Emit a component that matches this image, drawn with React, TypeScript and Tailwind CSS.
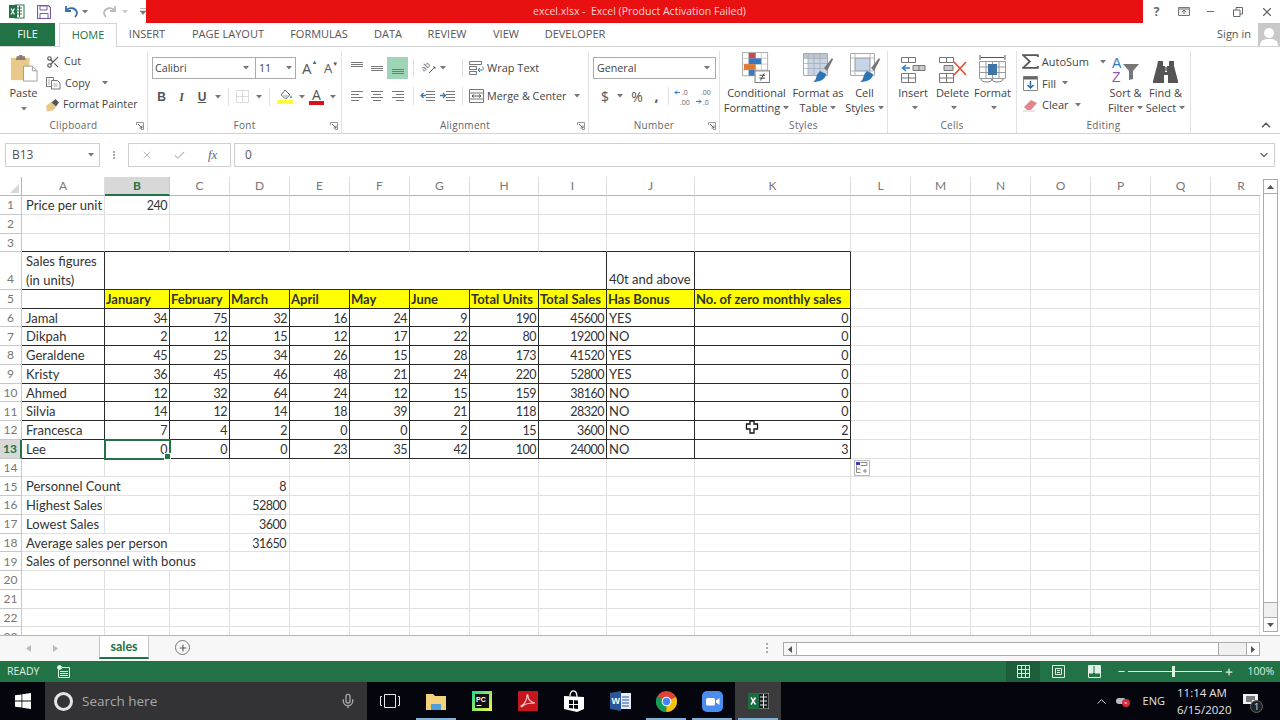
import { Fragment, ReactNode } from 'react'
import { Mic, Scissors, ChevronUp, ChevronDown, X, Check, Plus, Minus } from 'lucide-react'

const table: (string | number)[][] = [
  ['Jamal', 34, 75, 32, 16, 24, 9, 190, 45600, 'YES', 0],
  ['Dikpah', 2, 12, 15, 12, 17, 22, 80, 19200, 'NO', 0],
  ['Geraldene', 45, 25, 34, 26, 15, 28, 173, 41520, 'YES', 0],
  ['Kristy', 36, 45, 46, 48, 21, 24, 220, 52800, 'YES', 0],
  ['Ahmed', 12, 32, 64, 24, 12, 15, 159, 38160, 'NO', 0],
  ['Silvia', 14, 12, 14, 18, 39, 21, 118, 28320, 'NO', 0],
  ['Francesca', 7, 4, 2, 0, 0, 2, 15, 3600, 'NO', 2],
  ['Lee', 0, 0, 0, 23, 35, 42, 100, 24000, 'NO', 3],
]

const months = ['January', 'February', 'March', 'April', 'May', 'June', 'Total Units', 'Total Sales', 'Has Bonus', 'No. of zero monthly sales']
const columns = ['A', 'B', 'C', 'D', 'E', 'F', 'G', 'H', 'I', 'J', 'K', 'L', 'M', 'N', 'O', 'P', 'Q']

function Caret({ className = 'ml-[3px]' }: { className?: string }) {
  return (
    <svg width="6" height="4" viewBox="0 0 6 4" className={`shrink-0 ${className}`}>
      <path d="M0 0h6L3 3.5z" fill="#777" />
    </svg>
  )
}

function Launcher() {
  return (
    <svg width="8" height="8" viewBox="0 0 8 8" className="shrink-0">
      <path d="M.5 3V.5H7.500V7.500H5" fill="none" stroke="#999" />
      <path d="M2 2l4 4M6 3.500V6H3.500" fill="none" stroke="#666" />
    </svg>
  )
}

function Group({ width, label, launcher, children }: { width: string; label: string; launcher?: boolean; children: ReactNode }) {
  return (
    <div className={`${width} shrink-0 h-[82px] border-r border-[#e2e2e2] flex flex-col`}>
      <div className="flex-1 min-h-0 flex">{children}</div>
      <div className="h-[16px] flex items-center relative">
        <span className="flex-1 text-center text-[10px] text-[#666] tracking-[0.3px]">{label}</span>
        {launcher && <span className="absolute right-[3px] top-[5px]"><Launcher /></span>}
      </div>
    </div>
  )
}

function Big({ width, icon, l1, l2, caret }: { width: string; icon: ReactNode; l1: string; l2?: string; caret?: boolean }) {
  return (
    <div className={`${width} shrink-0 flex flex-col items-center text-[#444] text-[11px] leading-[15px]`}>
      <div className="h-[33px] flex items-end justify-center">{icon}</div>
      <div className="whitespace-nowrap mt-[1px]">{l1}</div>
      <div className="flex items-center justify-center whitespace-nowrap h-[15px]">
        {l2}
        {caret && <Caret />}
      </div>
    </div>
  )
}

function Lines({ rows, y = 0 }: { rows: [number, number, number][]; y?: number }) {
  return (
    <svg width="14" height="14" viewBox="0 0 14 14" style={{ marginTop: y }}>
      {rows.map(([a, b, c], i) => (
        <path key={i} d={`M${a} ${c}.5H${b}`} stroke="#777" />
      ))}
    </svg>
  )
}

function IndentIcon({ right }: { right?: boolean }) {
  return (
    <svg width="15" height="12" viewBox="0 0 15 12">
      {[1, 4, 7, 10].map((y) => (
        <path key={y} d={`M6 ${y}.5H15`} stroke="#777" />
      ))}
      <path d={right ? 'M0 5.500H5M3 3l2.500 2.500L3 8' : 'M6 5.500H1M3.500 3L1 5.500 3.500 8'} fill="none" stroke="#2b7cc4" strokeWidth="1.300" />
    </svg>
  )
}

function DecimalIcon({ more }: { more?: boolean }) {
  return (
    <svg width="16" height="19" viewBox="0 0 16 19" className="shrink-0 overflow-visible" fontFamily="Open Sans" fontSize="7" fill="#666">
      <text x={more ? 5 : 7} y="8">{more ? '.00' : '.0'}</text>
      <text x={more ? 7 : 5} y="17.500">{more ? '.0' : '.00'}</text>
      <path d={more ? 'M0 14.500h5M3 12.500l2 2-2 2' : 'M5 5.500H0M2 3.500l-2 2 2 2'} fill="none" stroke="#2b7cc4" />
    </svg>
  )
}

function PasteIcon() {
  return (
    <svg width="28" height="28" viewBox="0 0 30 30">
      <rect x="1" y="4" width="20" height="24" fill="#e8c98a" />
      <path d="M7 4V2.500h2.500L10 1h3l.5 1.500H16V4l1 2.500H6z" fill="#8a7c6e" />
      <path d="M14.500 13H24l5 5v11H14.500z" fill="#fff" stroke="#999" />
      <path d="M24 13v5h5" fill="none" stroke="#999" />
    </svg>
  )
}

function CopyIcon() {
  return (
    <svg width="15" height="14" viewBox="0 0 15 14" fill="#fff" stroke="#777">
      <path d="M.5 1.500h7v9h-7z" />
      <path d="M5.500 4.500h6l2.500 2.500v6H5.500z" />
      <path d="M7.500 8h4M7.500 10h4M2 4h2M2 6h2M2 8h2" stroke="#aaa" />
    </svg>
  )
}

function PainterIcon() {
  return (
    <svg width="16" height="16" viewBox="0 0 16 16">
      <path d="M1 9l5-4 5 5-3 3.500-3.500.5L2 14.500z" fill="#e5c789" />
      <path d="M6.500 5.500L10.500 2 14 5.500l-3 4z" fill="#555" />
    </svg>
  )
}

function ConditionalIcon() {
  return (
    <svg width="29" height="32" viewBox="0 0 30 33">
      <path d="M.5 .5h26v24H.5z" fill="#fff" stroke="#aaa" />
      <path d="M7 1v24M14 1v24M20 1v24M1 6.500h25M1 12.500h25M1 18.500h25" stroke="#ccc" />
      <rect x="7" y="1" width="7" height="5.500" fill="#c94a4a" />
      <rect x="7" y="6.500" width="13" height="6" fill="#3c78c0" />
      <rect x="2" y="12.500" width="12" height="6" fill="#e07a32" />
      <rect x="7" y="18.500" width="6" height="6" fill="#3c78c0" />
      <rect x="13.500" y="19.500" width="15" height="12" fill="#fff" stroke="#777" />
      <path d="M18 24h6M18 27h6M23 22l-4 7.500" stroke="#444" fill="none" />
    </svg>
  )
}

function BrushTableIcon({ full }: { full?: boolean }) {
  return (
    <svg width="30" height="32" viewBox="0 0 30 32">
      <path d="M.5 1.500h24v22H.5z" fill="#fff" stroke="#aaa" />
      {full ? (
        <>
          <rect x="1" y="2" width="23" height="4" fill="#bfc5cc" />
          <rect x="5" y="6" width="19" height="17" fill="#c9d5e3" />
          <path d="M5 2v21M11 2v21M17 2v21M1 6.500h23M1 11.500h23M1 16.500h23" stroke="#9fa9b5" strokeWidth=".7" />
        </>
      ) : (
        <>
          <rect x="5" y="6" width="15" height="13" fill="#c5d5e8" stroke="#999" />
          <path d="M1 6h4M20 6h4M1 19h4M20 19h4M5 2v4M20 2v4M5 19v4M20 19v4" stroke="#bbb" />
        </>
      )}
      <path d="M21 16L29 6l1 1.500L24 19z" fill="#777" />
      <path d="M17 19l6 3c0 4-4 8-13 8 3-2 3-4 4-7 1-2 2-3 3-4z" fill="#2e75b6" />
    </svg>
  )
}

function InsertIcon() {
  return (
    <svg width="26" height="28" viewBox="0 0 26 28" fill="#fff" stroke="#777">
      <path d="M1.500 1.500h14v5h-14zM8.500 1.500v5M1.500 17.500h14v9h-14zM8.500 17.500v9M1.500 22h14" />
      <path d="M13 9.500h12v5H13zM19 9.500v5" fill="#ccc" />
      <path d="M10 12H2.500M6 9l-3.500 3L6 15" fill="none" stroke="#2b7cc4" strokeWidth="1.400" />
    </svg>
  )
}

function DeleteIcon() {
  return (
    <svg width="30" height="28" viewBox="0 0 30 28" fill="#fff" stroke="#777">
      <path d="M1.500 1.500h14v5h-14zM8.500 1.500v5M1.500 17.500h14v9h-14zM8.500 17.500v9M1.500 22h14" />
      <path d="M6 9.500h9v5H6z" fill="#ccc" />
      <path d="M16 6l12 13M28 6L16 19" stroke="#e0573a" strokeWidth="1.800" fill="none" />
    </svg>
  )
}

function FormatIcon() {
  return (
    <svg width="28" height="30" viewBox="0 0 28 30" fill="none" stroke="#999">
      <path d="M1 1v5M26 1v5M2 3.500h23" stroke="#555" />
      <path d="M.5 7.500h26v17H.5zM7 7.500v17M13.500 7.500v17M20 7.500v17M1 13h25M1 18.500h25" />
      <rect x="9" y="10" width="9" height="11" fill="#3f74a8" stroke="none" />
      <path d="M2 25c0 4 11 4 11 0 0 4 11 4 11 0" stroke="#777" />
    </svg>
  )
}

function Binoculars() {
  return (
    <svg width="26" height="24" viewBox="0 0 26 24" fill="#555">
      <path d="M5 1h5v5h2v6h2V6h2V1h5v5l4 15v2H15v-8h-4v8H0v-2L4 6z" />
      <path d="M12 7h2v4h-2z" fill="#888" />
    </svg>
  )
}

function SortIcon() {
  return (
    <svg width="30" height="28" viewBox="0 0 30 28">
      <text x="1" y="12" fontSize="14" fontFamily="Liberation Sans" fill="#3c78c0">A</text>
      <text x="1" y="26" fontSize="14" fontFamily="Liberation Sans" fill="#8e5aa8">Z</text>
      <path d="M12 8h16l-6 7v8l-4 1v-9z" fill="#777" />
    </svg>
  )
}

function Title() {
  return (
    <div className="h-[23px] flex shrink-0 bg-white">
      <div className="w-[146px] shrink-0 flex items-center">
        <svg width="16" height="15" viewBox="0 0 16 15" className="ml-[9px]">
          <rect x="6" y="1" width="9" height="13" fill="#fff" stroke="#217346" />
          <path d="M8 4h5M8 7h5M8 10h5M10.500 2v11" stroke="#217346" />
          <rect x="0" y="1" width="8" height="13" fill="#217346" />
          <path d="M2 4.500l3.500 6M5.500 4.500l-3.500 6" stroke="#fff" strokeWidth="1.200" />
        </svg>
        <svg width="14" height="14" viewBox="0 0 14 14" className="ml-[12px]">
          <path d="M.5 .5h11l2 2v11H.5z" fill="#fff" stroke="#7a5a9f" strokeWidth="1.200" />
          <path d="M3 1v4h7V1zM3 13V8.500h8V13" fill="none" stroke="#7a5a9f" />
        </svg>
        <svg width="15" height="13" viewBox="0 0 15 13" className="ml-[13px]">
          <path d="M2 1v5h5M2 6c3-4 10-4 11 2 0 2-1 3-2 4" fill="none" stroke="#3b6ea5" strokeWidth="1.800" />
        </svg>
        <Caret className="ml-[3px]" />
        <svg width="15" height="13" viewBox="0 0 15 13" className="ml-[14px]">
          <path d="M13 1v5H8M13 6C10 2 3 2 2 8c0 2 1 3 2 4" fill="none" stroke="#bbb" strokeWidth="1.800" />
        </svg>
        <Caret className="ml-[5px] opacity-40" />
        <svg width="6" height="7" viewBox="0 0 6 7" className="ml-[12px]">
          <path d="M0 .5h6M0 3h6L3 6.500z" fill="#777" stroke="#777" strokeWidth=".5" />
        </svg>
      </div>
      <div className="flex-1 bg-[#e81010] text-[#fbd4d4] text-[10.500px] flex items-center justify-center pr-[10px] pt-[1px]">
        excel.xlsx -&nbsp; Excel (Product Activation Failed)
      </div>
      <div className="w-[137px] shrink-0 flex items-center text-[#666]">
        <span className="w-[27px] text-center font-bold text-[12px]">?</span>
        <svg width="12" height="9" viewBox="0 0 12 9" className="ml-[8px]">
          <path d="M.5 .5h11v8H.5z" fill="#eee" stroke="#777" />
          <path d="M6 7V3M4 5l2-2 2 2M1 2h10" fill="none" stroke="#777" />
        </svg>
        <Minus size={11} className="ml-[15px]" strokeWidth={2} />
        <svg width="10" height="10" viewBox="0 0 10 10" className="ml-[17px]">
          <path d="M.5 3h6.500v6.500H.5zM3 3V.5h6.500V7H7" fill="none" stroke="#666" />
        </svg>
        <X size={14} className="ml-[17px]" strokeWidth={2} />
      </div>
    </div>
  )
}

function Tabs() {
  const items = [
    ['INSERT', 'w-[60px]'],
    ['PAGE LAYOUT', 'w-[102px]'],
    ['FORMULAS', 'w-[80px]'],
    ['DATA', 'w-[58px]'],
    ['REVIEW', 'w-[60px]'],
    ['VIEW', 'w-[58px]'],
    ['DEVELOPER', 'w-[80px]'],
  ]
  return (
    <div className="h-[23px] flex items-stretch shrink-0 bg-white text-[11px] text-[#555]">
      <div className="w-[55px] bg-[#217346] text-white flex items-center justify-center">FILE</div>
      <div className="ml-[4px] w-[58px] border border-b-0 border-[#d4d4d4] text-[#217346] flex items-center justify-center bg-white relative z-10 h-[24px]">HOME</div>
      {items.map(([t, w]) => (
        <div key={t} className={`${w} flex items-center justify-center`}>{t}</div>
      ))}
      <div className="flex-1 flex items-center justify-end text-[11px]">Sign in</div>
      <div className="ml-[7px] w-[22px] h-[23px] bg-[#c9c9c9] flex items-end justify-center overflow-hidden">
        <svg width="20" height="20" viewBox="0 0 20 20" fill="#fff">
          <circle cx="10" cy="7" r="5" />
          <path d="M1 20c0-6 4-7 9-7s9 1 9 7z" />
        </svg>
      </div>
    </div>
  )
}

function Ribbon() {
  return (
    <div className="h-[88px] shrink-0 bg-white border-y border-[#d4d4d4] flex pt-[4px] text-[#444] text-[10.700px] relative">
      <Group width="w-[148px]" label="Clipboard" launcher>
        <div className="w-[46px] flex flex-col items-center pt-[3px] pl-[1px]">
          <PasteIcon />
          <span className="mt-[3px] leading-[15px] text-[11px]">Paste</span>
          <Caret className="mt-[7px]" />
        </div>
        <div className="flex flex-col text-[10.700px] leading-[21.500px]">
          <div className="flex items-center gap-[4px]"><Scissors size={14} color="#555" /><span>Cut</span></div>
          <div className="flex items-center gap-[4px]"><CopyIcon /><span>Copy</span><Caret className="ml-[8px]" /></div>
          <div className="flex items-center gap-[2px] -ml-[1px]"><PainterIcon /><span>Format Painter</span></div>
        </div>
      </Group>

      <Group width="w-[194px]" label="Font" launcher>
        <div className="flex flex-col pl-[4px] pt-[6px]">
          <div className="flex items-center">
            <div className="w-[104px] h-[22px] border border-[#ababab] flex items-center pl-[2px] pr-[6px] justify-between">
              <span>Calibri</span><Caret />
            </div>
            <div className="w-[40px] h-[22px] border border-l-0 border-[#ababab] flex items-center pl-[3px] pr-[3px] justify-between">
              <span>11</span><Caret />
            </div>
            <span className="ml-[6px] w-[22px] text-[15px] text-[#555] flex items-start">A<span className="text-[6px] text-[#2b6ca3] leading-[10px]">▲</span></span>
            <span className="w-[20px] text-[13px] text-[#555] flex items-start">A<span className="text-[6px] leading-[10px]">▼</span></span>
          </div>
          <div className="flex items-center mt-[6px] h-[22px] text-[#555]">
            <span className="w-[19px] text-center font-bold text-[12px] font-['Liberation_Sans',sans-serif]">B</span>
            <span className="w-[21px] text-center italic text-[12px] font-['Liberation_Serif',serif] font-bold">I</span>
            <span className="w-[20px] text-center underline font-bold text-[12px] font-['Liberation_Sans',sans-serif]">U</span>
            <Caret className="ml-[3px]" />
            <span className="ml-[7px] h-[18px] border-l border-[#e0e0e0]" />
            <svg width="13" height="13" viewBox="0 0 13 13" className="ml-[7px]">
              <path d="M.5 .5h12v12H.5zM6.500 .5v12M.5 6.500h12" fill="none" stroke="#bbb" strokeDasharray="1 1" />
            </svg>
            <Caret className="ml-[7px]" />
            <span className="ml-[7px] h-[18px] border-l border-[#e0e0e0]" />
            <span className="ml-[7px] flex flex-col items-center">
              <svg width="15" height="11" viewBox="0 0 15 11">
                <path d="M7 1l5 5-4 4-5-4z" fill="#fff" stroke="#666" />
                <path d="M3 6h9l-4 4z" fill="#ccc" />
                <path d="M13 6l1 3h-2z" fill="#2b7cc4" />
              </svg>
              <span className="w-[16px] h-[4px] bg-[#ffff33]" />
            </span>
            <Caret className="ml-[6px]" />
            <span className="ml-[4px] flex flex-col items-center leading-[12px] text-[14px] text-[#555]">
              A
              <span className="w-[15px] h-[4px] bg-[#d8121c]" />
            </span>
            <Caret className="ml-[6px]" />
          </div>
        </div>
      </Group>

      <Group width="w-[247px]" label="Alignment" launcher>
        <div className="flex flex-col pl-[4px] pt-[6px]">
          <div className="flex items-center h-[22px]">
            <span className="w-[21px] flex justify-center"><Lines rows={[[1, 13, 1], [1, 13, 3], [1, 13, 5]]} /></span>
            <span className="w-[20px] flex justify-center"><Lines rows={[[1, 13, 5], [1, 13, 7], [1, 13, 9]]} /></span>
            <span className="w-[21px] h-[22px] bg-[#9fd5b7] flex justify-center items-center"><Lines rows={[[1, 13, 8], [1, 13, 10], [1, 13, 12]]} /></span>
            <span className="ml-[5px] h-[18px] border-l border-[#e0e0e0]" />
            <svg width="16" height="14" viewBox="0 0 16 14" className="ml-[7px] overflow-visible">
              <text transform="translate(3 11) rotate(-45)" fontSize="8" fontFamily="Open Sans" fill="#666">ab</text>
              <path d="M8 12l6-6M12 6h2v2" fill="none" stroke="#666" />
            </svg>
            <Caret className="ml-[3px]" />
            <span className="ml-[16px] h-[18px] border-l border-[#e0e0e0]" />
            <svg width="16" height="14" viewBox="0 0 16 14" className="ml-[6px]" fill="none" stroke="#777">
              <path d="M.5 .5h12v3H.5zM.5 5.500h7v3h-7zM.5 10.500h7v3h-7z" />
              <path d="M9 9h4c2 0 2-3 0-3M9 9l2-2M9 9l2 2" stroke="#2b7cc4" />
            </svg>
            <span className="ml-[2px] whitespace-nowrap text-[11px]">Wrap Text</span>
          </div>
          <div className="flex items-center mt-[6px] h-[22px]">
            <span className="w-[21px] flex justify-center"><Lines rows={[[1, 13, 2], [1, 9, 5], [1, 13, 8], [1, 9, 11]]} /></span>
            <span className="w-[20px] flex justify-center"><Lines rows={[[1, 13, 2], [3, 11, 5], [1, 13, 8], [3, 11, 11]]} /></span>
            <span className="w-[21px] flex justify-center"><Lines rows={[[1, 13, 2], [5, 13, 5], [1, 13, 8], [5, 13, 11]]} /></span>
            <span className="ml-[5px] h-[18px] border-l border-[#e0e0e0]" />
            <span className="ml-[6px]"><IndentIcon /></span>
            <span className="ml-[5px]"><IndentIcon right /></span>
            <span className="ml-[7px] h-[18px] border-l border-[#e0e0e0]" />
            <svg width="16" height="14" viewBox="0 0 16 14" className="ml-[6px]" fill="#fff" stroke="#777">
              <path d="M.5 .5h14v13H.5zM.5 4h14M.5 10h14" />
              <path d="M3 7h9M3 7l2-1.500M3 7l2 1.500M12 7l-2-1.500M12 7l-2 1.500" stroke="#555" />
            </svg>
            <span className="ml-[2px] whitespace-nowrap text-[10.800px]">Merge &amp; Center</span>
            <Caret className="ml-[8px]" />
          </div>
        </div>
      </Group>

      <Group width="w-[131px]" label="Number" launcher>
        <div className="flex flex-col pl-[4px] pt-[6px]">
          <div className="w-[123px] h-[22px] border border-[#ababab] flex items-center justify-between pl-[3px] pr-[5px]">
            <span>General</span><Caret />
          </div>
          <div className="flex items-center mt-[6px] h-[22px] text-[#555]">
            <span className="ml-[5px] w-[14px] text-center text-[14px]">$</span>
            <Caret className="ml-[5px]" />
            <span className="ml-[6px] w-[16px] text-center text-[14px]">%</span>
            <span className="ml-[7px] w-[9px] text-center font-bold text-[14px] leading-[14px]">,</span>
            <span className="ml-[7px] h-[18px] border-l border-[#e0e0e0]" />
            <span className="ml-[6px]"><DecimalIcon /></span>
            <span className="ml-[5px]"><DecimalIcon more /></span>
          </div>
        </div>
      </Group>

      <Group width="w-[168px]" label="Styles">
        <Big width="w-[73px]" icon={<ConditionalIcon />} l1="Conditional" l2="Formatting" caret />
        <Big width="w-[50px]" icon={<BrushTableIcon full />} l1="Format as" l2="Table" caret />
        <Big width="w-[43px]" icon={<BrushTableIcon />} l1="Cell" l2="Styles" caret />
      </Group>

      <Group width="w-[129px]" label="Cells">
        <div className="w-[5px]" />
        <Big width="w-[40px]" icon={<InsertIcon />} l1="Insert" caret />
        <Big width="w-[39px]" icon={<DeleteIcon />} l1="Delete" caret />
        <Big width="w-[41px]" icon={<FormatIcon />} l1="Format" caret />
      </Group>

      <Group width="w-[174px]" label="Editing">
        <div className="w-[89px] flex flex-col pl-[5px] leading-[21.500px] text-[11px]">
          <div className="flex items-center gap-[3px]">
            <svg width="17" height="15" viewBox="0 0 17 15"><path d="M16 3V1H1l7 6.500L1 14h15v-2" fill="none" stroke="#555" strokeWidth="1.800" /></svg>
            <span>AutoSum</span><Caret className="ml-[8px]" />
          </div>
          <div className="flex items-center gap-[3px]">
            <svg width="17" height="15" viewBox="0 0 15 15">
              <path d="M.5 .5h14v14H.5z" fill="#fff" stroke="#888" />
              <path d="M.5 .5h14v3H.5z" fill="#666" />
              <path d="M7.500 5v7M4.500 9l3 3 3-3" fill="none" stroke="#2b6ca3" strokeWidth="1.500" />
            </svg>
            <span>Fill</span><Caret />
          </div>
          <div className="flex items-center gap-[3px]">
            <svg width="17" height="14" viewBox="0 0 15 14">
              <path d="M1 9l7-7 6 3-6 7H4z" fill="#e5838f" />
              <path d="M0 13h12" stroke="#ccc" />
            </svg>
            <span>Clear</span><Caret />
          </div>
        </div>
        <Big width="w-[39px]" icon={<SortIcon />} l1="Sort &" l2="Filter" caret />
        <Big width="w-[41px]" icon={<Binoculars />} l1="Find &" l2="Select" caret />
      </Group>

      <ChevronUp size={14} color="#555" strokeWidth={2.500} className="absolute right-[7px] bottom-[1px]" />
    </div>
  )
}

function FormulaBar() {
  return (
    <div className="h-[24px] mt-[9px] shrink-0 flex items-stretch text-[12px] text-[#555] bg-white pl-[5px] pr-[5px]">
      <div className="w-[95px] border border-[#cfcfcf] flex items-center justify-between pl-[6px] pr-[5px]">
        <span>B13</span><Caret />
      </div>
      <div className="w-[28px] flex items-center justify-center flex-col gap-[1px]">
        <span className="w-[2px] h-[2px] bg-[#aaa]" /><span className="w-[2px] h-[2px] bg-[#aaa]" /><span className="w-[2px] h-[2px] bg-[#aaa]" />
      </div>
      <div className="w-[103px] border border-[#cfcfcf] flex items-center pl-[12px]">
        <X size={12} color="#bbb" />
        <Check size={13} color="#bbb" className="ml-[20px]" />
        <span className="ml-[22px] italic font-['Liberation_Serif',serif] text-[13px] text-[#666]">fx</span>
      </div>
      <div className="flex-1 ml-[3px] border border-[#cfcfcf] flex items-center justify-between pl-[10px] pr-[4px]">
        <span>0</span>
        <ChevronDown size={12} color="#666" strokeWidth={2.500} />
      </div>
    </div>
  )
}

function Head({ n, active, tall }: { n: number; active?: boolean; tall?: boolean }) {
  return (
    <div className={active
      ? 'bg-[#d8d8d8] border-r-2 border-b border-r-[#217346] border-b-[#c8c8c8] text-[#217346] font-bold flex items-center justify-center text-[12px] pt-[1px]'
      : tall
        ? 'border-r border-b border-[#c8c8c8] text-[#777] flex items-end justify-center text-[12px] pb-[1px]'
        : 'border-r border-b border-[#c8c8c8] text-[#777] flex items-center justify-center text-[12px] pt-[1px]'}>
      {n}
    </div>
  )
}

function Cell({ children, right, dark, darkBottom, className = '' }: { children?: ReactNode; right?: boolean; dark?: boolean; darkBottom?: boolean; className?: string }) {
  const border = dark
    ? 'border-r border-b border-[#2a2a2a]'
    : darkBottom
      ? 'border-r border-r-[#e0e0e0] border-b border-b-[#2a2a2a]'
      : 'border-r border-b border-[#e0e0e0]'
  return (
    <div className={`${border} ${right ? 'text-right pr-[2px] text-[12.500px] tracking-[-0.5px]' : 'pl-[4px]'} whitespace-nowrap leading-[19px] ${className}`}>
      {children}
    </div>
  )
}

function Blank({ count }: { count: number }) {
  return (
    <>
      {Array.from({ length: count }).map((_, i) => (
        <Cell key={i} />
      ))}
    </>
  )
}

function Sheet() {
  return (
    <div className="h-[459px] shrink-0 mt-[10px] flex bg-white border-b border-[#b5b5b5]">
      <div className="w-[1260px] shrink-0 overflow-hidden">
        <div className="grid grid-cols-[22px_83px_65px_60px_60px_60px_60px_60px_69px_68px_88px_156px_60px_60px_60px_60px_60px_60px_49px] grid-rows-[19px_18.750px_18.750px_18.750px_37.500px_repeat(19,18.750px)] text-[13px] text-[#333] font-['Lato',sans-serif]">
          {/* corner + column letters */}
          <div className="border-r border-b border-[#b5b5b5] flex items-end justify-end p-[2px]">
            <svg width="9" height="9" viewBox="0 0 9 9"><path d="M9 0v9H0z" fill="#d8d8d8" /></svg>
          </div>
          {columns.map((c) => (
            <div
              key={c}
              className={c === 'B'
                ? 'bg-[#d8d8d8] border-r border-b-2 border-r-[#c8c8c8] border-b-[#217346] text-[#217346] font-bold text-center leading-[18px] text-[12px]'
                : 'border-r border-b border-r-[#dcdcdc] border-b-[#b5b5b5] text-[#777] text-center leading-[18px] text-[12px]'}
            >
              {c}
            </div>
          ))}
          <div className="border-b border-[#b5b5b5] text-[#777] leading-[18px] text-[12px] text-center pl-[11px]">R</div>

          {/* row 1-3 */}
          <Head n={1} />
          <Cell>Price per unit</Cell>
          <Cell right>240</Cell>
          <Blank count={16} />
          <Head n={2} />
          <Blank count={18} />
          <Head n={3} />
          {Array.from({ length: 11 }).map((_, i) => (
            <Cell key={i} darkBottom />
          ))}
          <Blank count={7} />

          {/* row 4 */}
          <Head n={4} tall />
          <Cell dark className="!leading-[18.750px]">Sales figures<br />(in units)</Cell>
          <Cell dark className="col-span-8" />
          <Cell dark className="flex items-end !pl-[2px]">40t and above</Cell>
          <Cell dark />
          <Blank count={7} />

          {/* row 5 */}
          <Head n={5} />
          <Cell dark />
          {months.map((m) => (
            <Cell key={m} dark className="bg-[#ffff00] font-bold !pl-[1px]">{m}</Cell>
          ))}
          <Blank count={7} />

          {/* rows 6-13 */}
          {table.map((row, r) => (
            <Fragment key={r}>
              <Head n={r + 6} active={r === 7} />
              {row.map((v, c) => {
                const selected = r === 7 && c === 1
                return (
                  <Cell
                    key={c}
                    dark
                    right={typeof v === 'number'}
                    className={selected ? 'relative z-10 outline-2 -outline-offset-1 outline-[#217346]' : r === 6 && c === 10 ? 'relative' : c === 9 ? '!pl-[2px]' : ''}
                  >
                    {v}
                    {selected && <span className="absolute -right-[2px] -bottom-[2px] w-[5px] h-[5px] bg-[#217346] border border-white box-content" />}
                    {r === 6 && c === 10 && (
                      <svg width="14" height="14" viewBox="0 0 14 14" className="absolute left-[50px] top-[-1px]">
                        <path d="M5 1h4v3h3.500v5H9v4H5V9H1.500V4H5z" fill="#fff" stroke="#111" strokeWidth="1.300" />
                      </svg>
                    )}
                  </Cell>
                )
              })}
              <Blank count={7} />
            </Fragment>
          ))}

          {/* rows 14-23 */}
          <Head n={14} />
          <Blank count={11} />
          <div className="relative border-r border-b border-[#e0e0e0]">
            <div className="absolute left-[3px] top-[1px] w-[16px] h-[16px] bg-white border border-[#bbb] flex items-center justify-center z-10">
              <svg width="12" height="12" viewBox="0 0 12 12" fill="none">
                <rect x="0" y="0" width="4" height="3" fill="#3a3ad0" />
                <path d="M4.500 .5H11v3H4.500M.5 3.500v7h4M.5 7h4" stroke="#888" />
                <path d="M9 7v4M7 9h4" stroke="#888" />
              </svg>
            </div>
          </div>
          <Blank count={6} />

          <Head n={15} />
          <Cell className="col-span-2">Personnel Count</Cell>
          <Cell />
          <Cell right className="pr-[3px]">8</Cell>
          <Blank count={14} />

          <Head n={16} />
          <Cell>Highest Sales</Cell>
          <Cell />
          <Cell />
          <Cell right className="pr-[3px]">52800</Cell>
          <Blank count={14} />

          <Head n={17} />
          <Cell>Lowest Sales</Cell>
          <Cell />
          <Cell />
          <Cell right className="pr-[3px]">3600</Cell>
          <Blank count={14} />

          <Head n={18} />
          <Cell className="col-span-3">Average sales per person</Cell>
          <Cell right className="pr-[3px]">31650</Cell>
          <Blank count={14} />

          <Head n={19} />
          <Cell className="col-span-3">Sales of personnel with bonus</Cell>
          <Blank count={15} />

          {[20, 21, 22, 23].map((n) => (
            <Fragment key={n}>
              <Head n={n} />
              <Blank count={18} />
            </Fragment>
          ))}
        </div>
      </div>
      {/* vertical scrollbar */}
      <div className="ml-[3px] w-[15px] mt-[2px] mb-[3px] border border-[#ababab] flex flex-col">
        <div className="h-[14px] border-b border-[#ababab] flex items-center justify-center">
          <svg width="7" height="4" viewBox="0 0 7 4"><path d="M0 4h7L3.500 0z" fill="#555" /></svg>
        </div>
        <div className="h-[409px] border-b border-[#ababab] bg-white" />
        <div className="flex-1 bg-[#f0f0f0]" />
        <div className="h-[14px] border-t border-[#ababab] bg-white flex items-center justify-center">
          <svg width="7" height="4" viewBox="0 0 7 4"><path d="M0 0h7L3.500 4z" fill="#555" /></svg>
        </div>
      </div>
    </div>
  )
}

function SheetTabs() {
  return (
    <div className="h-[25px] shrink-0 bg-[#f7f7f7] flex items-start">
      <svg width="5" height="7" viewBox="0 0 5 7" className="ml-[26px] mt-[9px]"><path d="M5 0v7L0 3.500z" fill="#bbb" /></svg>
      <svg width="5" height="7" viewBox="0 0 5 7" className="ml-[22px] mt-[9px]"><path d="M0 0v7l5-3.500z" fill="#bbb" /></svg>
      <div className="ml-[41px] w-[50px] h-[23px] bg-white border-x border-b-2 border-x-[#c6c6c6] border-b-[#217346] text-[#217346] font-bold text-[12.500px] flex items-center justify-center pt-[2px] font-['Lato',sans-serif]">
        sales
      </div>
      <div className="ml-[26px] mt-[4px] w-[15px] h-[15px] rounded-full border border-[#777] flex items-center justify-center">
        <Plus size={10} color="#555" strokeWidth={2.500} />
      </div>
      <div className="ml-[576px] mt-[7px] flex flex-col gap-[2px]">
        <span className="w-[2px] h-[2px] bg-[#aaa]" /><span className="w-[2px] h-[2px] bg-[#aaa]" /><span className="w-[2px] h-[2px] bg-[#aaa]" />
      </div>
      <div className="ml-[15px] mt-[6px] w-[477px] h-[14px] border border-[#ababab] flex">
        <div className="w-[13px] border-r border-[#ababab] flex items-center justify-center">
          <svg width="4" height="7" viewBox="0 0 4 7"><path d="M4 0v7L0 3.500z" fill="#555" /></svg>
        </div>
        <div className="w-[422px] border-r border-[#ababab] bg-white" />
        <div className="flex-1 bg-[#f0f0f0]" />
        <div className="w-[13px] border-l border-[#ababab] bg-white flex items-center justify-center">
          <svg width="4" height="7" viewBox="0 0 4 7"><path d="M0 0v7l4-3.500z" fill="#555" /></svg>
        </div>
      </div>
    </div>
  )
}

function StatusBar() {
  return (
    <div className="h-[21px] shrink-0 bg-[#217346] text-[#dff0e6] text-[10.500px] flex items-center">
      <span className="ml-[7px]">READY</span>
      <svg width="13" height="13" viewBox="0 0 13 13" className="ml-[18px]" fill="none" stroke="#dff0e6">
        <circle cx="2.500" cy="2.500" r="2" fill="#dff0e6" />
        <path d="M5 2.500h7.500v10H1.500V5M3 6.500h8M3 8.500h8M3 10.500h8" />
      </svg>
      <div className="ml-[936px] w-[34px] h-[21px] bg-[#1b5e39] flex items-center justify-center">
        <svg width="13" height="13" viewBox="0 0 13 13" fill="none" stroke="#dff0e6"><path d="M.5 .5h12v12H.5zM4.500 .5v12M8.500 .5v12M.5 4.500h12M.5 8.500h12" /></svg>
      </div>
      <svg width="13" height="13" viewBox="0 0 13 13" className="ml-[12px]" fill="none" stroke="#dff0e6"><path d="M.5 .5h12v12H.5zM3.500 3.500h6v6h-6zM5 5.500h3M5 7.500h3" /></svg>
      <svg width="13" height="13" viewBox="0 0 13 13" className="ml-[23px]" fill="none" stroke="#dff0e6"><path d="M.5 .5h12v12H.5z" /><path d="M1 1h4v7H1zM7 1h5v7H7z" fill="#dff0e6" /></svg>
      <Minus size={9} strokeWidth={3} className="ml-[16px]" />
      <div className="ml-[2px] w-[94px] h-[1px] bg-[#dff0e6] relative">
        <span className="absolute left-[44px] -top-[5px] w-[3px] h-[11px] bg-[#dff0e6]" />
      </div>
      <Plus size={10} strokeWidth={3} className="ml-[2px]" />
      <span className="ml-[13px]">100%</span>
    </div>
  )
}

function AppSlot({ children, active, running }: { children: ReactNode; active?: boolean; running?: boolean }) {
  return (
    <div className={`${active ? 'w-[46px] bg-[#3b3b3d]' : 'w-[46px]'} h-[38px] shrink-0 flex items-center justify-center relative`}>
      {children}
      {running && <span className="absolute left-[3px] right-[3px] bottom-0 h-[2px] bg-[#7fb0d4]" />}
    </div>
  )
}

function Taskbar() {
  return (
    <div className="h-[38px] shrink-0 bg-[#05060d] flex items-stretch text-white">
      <div className="w-[45px] flex items-center justify-center">
        <svg width="16" height="16" viewBox="0 0 16 16" fill="#fff">
          <path d="M0 2.300l6.500-.9v6.200H0zM7.300 1.300L16 0v7.600H7.300zM0 8.400h6.500v6.200L0 13.700zM7.300 8.400H16V16l-8.700-1.200z" />
        </svg>
      </div>
      <div className="w-[322px] bg-[#333335] flex items-center">
        <span className="ml-[9px] w-[19px] h-[19px] rounded-full border-[3px] border-[#e4e4e4]" />
        <span className="ml-[9px] text-[#a8a8a8] text-[13.500px]">Search here</span>
        <Mic size={16} color="#a8a8a8" className="ml-auto mr-[11px]" />
      </div>
      <AppSlot>
        <svg width="20" height="14" viewBox="0 0 20 14" fill="none" stroke="#e8e8e8">
          <path d="M4.500 .5h11v13h-11zM2 2.500H.5v9H2M18 2.500h1.500v9H18" />
        </svg>
      </AppSlot>
      <AppSlot running>
        <svg width="20" height="17" viewBox="0 0 20 17">
          <path d="M0 1h7l2 2h11v14H0z" fill="#f4d27a" />
          <rect x="5" y="11" width="10" height="6" fill="#4d9fd4" />
        </svg>
      </AppSlot>
      <AppSlot>
        <svg width="20" height="20" viewBox="0 0 20 20">
          <defs>
            <linearGradient id="pc" x1="0" y1="0" x2="1" y2="1">
              <stop offset="0" stopColor="#21d789" /><stop offset="1" stopColor="#fcf84a" />
            </linearGradient>
          </defs>
          <rect width="20" height="20" fill="url(#pc)" />
          <rect x="3" y="3" width="14" height="14" fill="#111" />
          <text x="4" y="11" fontSize="7" fontWeight="700" fontFamily="Liberation Sans" fill="#fff">PC</text>
          <path d="M4.500 14.500h5" stroke="#fff" />
        </svg>
      </AppSlot>
      <AppSlot>
        <svg width="20" height="20" viewBox="0 0 20 20">
          <rect width="20" height="20" fill="#c4161c" />
          <path d="M3 15c3-1 6-6 6-10 0-2 1-2 1 0 0 4 3 6 7 7-3 0-8 0-11 2-2 2-3 2-3 1z" fill="none" stroke="#f4c4c4" strokeWidth="1.200" />
        </svg>
      </AppSlot>
      <AppSlot>
        <svg width="20" height="22" viewBox="0 0 20 22" fill="#fff">
          <path d="M0 6l20 1v12l-7 3-13-3z" />
          <path d="M6 6c0-7 7-7 7 1" fill="none" stroke="#fff" strokeWidth="1.300" />
          <path d="M5 10l4 .2v3.800H5zM10 10.300l4 .2V14h-4zM5 15h4v3.500l-4-.5zM10 15h4v4l-4-.5z" fill="#05060d" />
        </svg>
      </AppSlot>
      <AppSlot>
        <svg width="21" height="20" viewBox="0 0 21 20">
          <rect x="9" y="2" width="12" height="16" fill="#e8edf5" />
          <path d="M12 6h7M12 9h7M12 12h7M12 15h7" stroke="#2b579a" />
          <path d="M0 2l11-2v20L0 18z" fill="#2b579a" />
          <text x="1.500" y="13" fontSize="9" fontWeight="700" fontFamily="Liberation Sans" fill="#fff">W</text>
        </svg>
      </AppSlot>
      <AppSlot running>
        <svg width="21" height="21" viewBox="0 0 21 21">
          <circle cx="10.500" cy="10.500" r="10.500" fill="#db4437" />
          <path d="M10.500 10.500L1.400 5.200A10.500 10.500 0 0 0 10.500 21z" fill="#0f9d58" />
          <path d="M10.500 10.500V21A10.500 10.500 0 0 0 20 6z" fill="#f4c20d" />
          <circle cx="10.500" cy="10.500" r="4.800" fill="#fff" />
          <circle cx="10.500" cy="10.500" r="3.700" fill="#4285f4" />
        </svg>
      </AppSlot>
      <AppSlot running>
        <svg width="21" height="21" viewBox="0 0 21 21">
          <rect width="21" height="21" rx="5" fill="#4a8cf0" />
          <rect x="4" y="7" width="9" height="7.500" rx="1.500" fill="#fff" />
          <path d="M14 9.500l3.500-2.500v7L14 11.500z" fill="#fff" />
        </svg>
      </AppSlot>
      <AppSlot active running>
        <svg width="21" height="16" viewBox="0 0 21 16">
          <rect x="10" y="0" width="11" height="16" fill="#1d1d1f" stroke="#dfe9e2" strokeWidth=".8" />
          <path d="M12 4h7M12 8h7M12 12h7M15.500 1v14" stroke="#dfe9e2" />
          <rect x="0" y="0" width="11" height="16" fill="#1c6b41" />
          <path d="M3 4.500l4.500 7M7.500 4.500l-4.500 7" stroke="#fff" strokeWidth="1.400" />
        </svg>
      </AppSlot>
      <div className="flex-1 flex items-center justify-end text-[#e4e4e4]">
        <ChevronUp size={15} strokeWidth={1.500} />
        <span className="ml-[7px] relative w-[13px] h-[11px]">
          <span className="absolute left-0 top-[2px] w-[10px] h-[6px] rounded-full bg-[#bbb]" />
          <span className="absolute left-[6px] top-[3px] w-[8px] h-[8px] rounded-full bg-[#d6283c] text-white text-[6px] leading-[8px] text-center">×</span>
        </span>
        <span className="ml-[14px] text-[11px]">ENG</span>
        <div className="ml-[12px] w-[50px] text-center text-[11.500px] leading-[17px] whitespace-nowrap">
          11:14 AM
          <br />
          6/15/2020
        </div>
        <span className="ml-[16px] mr-[22px] relative w-[15px] h-[14px]">
          <svg width="15" height="14" viewBox="0 0 15 14" fill="#f0f0f0"><path d="M0 0h15v10h-4l-3 4v-4H0z" /><path d="M3 3h9M3 5h9M3 7h6" stroke="#05060d" /></svg>
          <span className="absolute left-[7px] top-[6px] w-[13px] h-[13px] rounded-full bg-[#222] border border-[#666] text-[9px] leading-[11px] text-center">1</span>
        </span>
      </div>
    </div>
  )
}

export default function App() {
  return (
    <div className="w-[1280px] h-[720px] overflow-hidden flex flex-col bg-white font-['Open_Sans',sans-serif]">
      <Title />
      <Tabs />
      <Ribbon />
      <FormulaBar />
      <Sheet />
      <SheetTabs />
      <StatusBar />
      <Taskbar />
    </div>
  )
}
